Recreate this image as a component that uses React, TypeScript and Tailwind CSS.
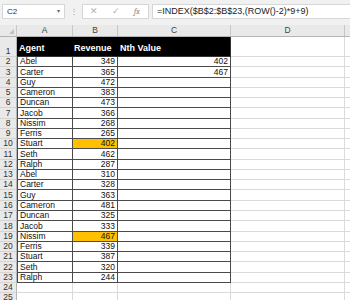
import React from "react";

const data: [string, number, boolean][] = [
  ["Abel", 349, false],
  ["Carter", 365, false],
  ["Guy", 472, false],
  ["Cameron", 383, false],
  ["Duncan", 473, false],
  ["Jacob", 366, false],
  ["Nissim", 268, false],
  ["Ferris", 265, false],
  ["Stuart", 402, true],
  ["Seth", 462, false],
  ["Ralph", 287, false],
  ["Abel", 310, false],
  ["Carter", 328, false],
  ["Guy", 363, false],
  ["Cameron", 481, false],
  ["Duncan", 325, false],
  ["Jacob", 333, false],
  ["Nissim", 467, true],
  ["Ferris", 339, false],
  ["Stuart", 387, false],
  ["Seth", 320, false],
  ["Ralph", 244, false],
];

const cVals: Record<number, string> = { 2: "402", 3: "467" };

function RowHdr({ n, h }: { n: string; h: string }) {
  return (
    <div
      className={`w-[17px] shrink-0 ${h} bg-[#e9e9e9] border-r border-b border-r-[#b4b4b4] border-b-[#d4d4d4] flex items-end justify-center text-[8.5px] leading-[10px] text-[#333]`}
    >
      {n}
    </div>
  );
}

export default function App() {
  const rowH = "h-[10.27px]";
  return (
    <div
      className="w-[350px] h-[300px] overflow-hidden bg-white text-[#111]"
      style={{ fontFamily: '"Liberation Sans", Arial, sans-serif' }}
    >
      {/* formula bar */}
      <div className="h-[25px] bg-[#f1f1f1] flex items-start pt-[4px] pl-[2px]">
        <div className="w-[63px] h-[15px] bg-white border border-[#d6d6d6] flex items-center justify-between px-[4px] text-[8px] text-[#333]">
          <span>C2</span>
          <span className="text-[6px] text-[#666]">▾</span>
        </div>
        <div className="w-[17px] h-[15px] flex items-center justify-center text-[8px] text-[#999]">⋮</div>
        <div className="w-[67px] h-[15px] bg-white border border-[#d6d6d6] flex items-center text-[#b0b0b0]">
          <span className="w-[22px] text-center text-[9px]">✕</span>
          <span className="w-[22px] text-center text-[9px]">✓</span>
          <span className="w-[20px] text-center text-[8px] italic font-serif text-[#888]">fx</span>
        </div>
        <div className="ml-[3px] flex-1 h-[15px] bg-white border border-[#d6d6d6] border-r-0 flex items-center pl-[4px] text-[9px] text-[#222] whitespace-nowrap">
          =INDEX($B$2:$B$23,(ROW()-2)*9+9)
        </div>
      </div>

      {/* column headers */}
      <div className="flex h-[12px] bg-[#e9e9e9] border-b border-[#b4b4b4] text-[8.5px] text-[#444] leading-[11px]">
        <div className="w-[17px] shrink-0 border-r border-[#c8c8c8] relative">
          <div className="absolute right-[2px] bottom-[2px] w-0 h-0 border-l-[5px] border-l-transparent border-b-[5px] border-b-[#c0c0c0]" />
        </div>
        <div className="w-[56px] shrink-0 border-r border-[#c8c8c8] text-center">A</div>
        <div className="w-[45px] shrink-0 border-r border-[#c8c8c8] text-center">B</div>
        <div className="w-[113px] shrink-0 border-r border-[#c8c8c8] text-center">C</div>
        <div className="w-[114px] shrink-0 border-r border-[#c8c8c8] text-center">D</div>
        <div className="flex-1" />
      </div>

      {/* row 1 */}
      <div className="flex h-[20px]">
        <RowHdr n="1" h="h-[20px]" />
        <div className="w-[56px] shrink-0 bg-black border-b border-[#333] text-white font-bold text-[9px] flex items-end pl-[2px] pb-[1px]">Agent</div>
        <div className="w-[45px] shrink-0 bg-black border-b border-[#333] text-white font-bold text-[9px] flex items-end pl-[1px] pb-[1px] whitespace-nowrap">Revenue</div>
        <div className="w-[113px] shrink-0 bg-black border-b border-r border-[#333] text-white font-bold text-[9px] flex items-end pl-[2px] pb-[1px]">Nth Value</div>
        <div className="w-[114px] shrink-0 border-b border-r border-[#dadada]" />
        <div className="flex-1 border-b border-[#dadada]" />
      </div>

      {data.map(([name, rev, hl], i) => {
        const r = i + 2;
        return (
          <div key={r} className={`flex ${rowH}`}>
            <RowHdr n={String(r)} h={rowH} />
            <div className="w-[56px] shrink-0 border-l border-b border-r border-[#4a4a4a] text-[8.5px] leading-[9px] flex items-end pl-[2px]">{name}</div>
            <div className={`w-[45px] shrink-0 border-b border-r border-[#4a4a4a] text-[8.5px] leading-[9px] flex items-end justify-end pr-[2px] ${hl ? "bg-[#ffc000]" : ""}`}>{rev}</div>
            <div className="w-[113px] shrink-0 border-b border-r border-[#4a4a4a] text-[8.5px] leading-[9px] flex items-end justify-end pr-[2px]">{cVals[r] ?? ""}</div>
            <div className="w-[114px] shrink-0 border-b border-r border-[#dadada]" />
            <div className="flex-1 border-b border-[#dadada]" />
          </div>
        );
      })}

      {[24, 25].map((r) => (
        <div key={r} className={`flex ${rowH}`}>
          <RowHdr n={String(r)} h={rowH} />
          <div className="w-[56px] shrink-0 border-b border-r border-[#dadada]" />
          <div className="w-[45px] shrink-0 border-b border-r border-[#dadada]" />
          <div className="w-[113px] shrink-0 border-b border-r border-[#dadada]" />
          <div className="w-[114px] shrink-0 border-b border-r border-[#dadada]" />
          <div className="flex-1 border-b border-[#dadada]" />
        </div>
      ))}
    </div>
  );
}
